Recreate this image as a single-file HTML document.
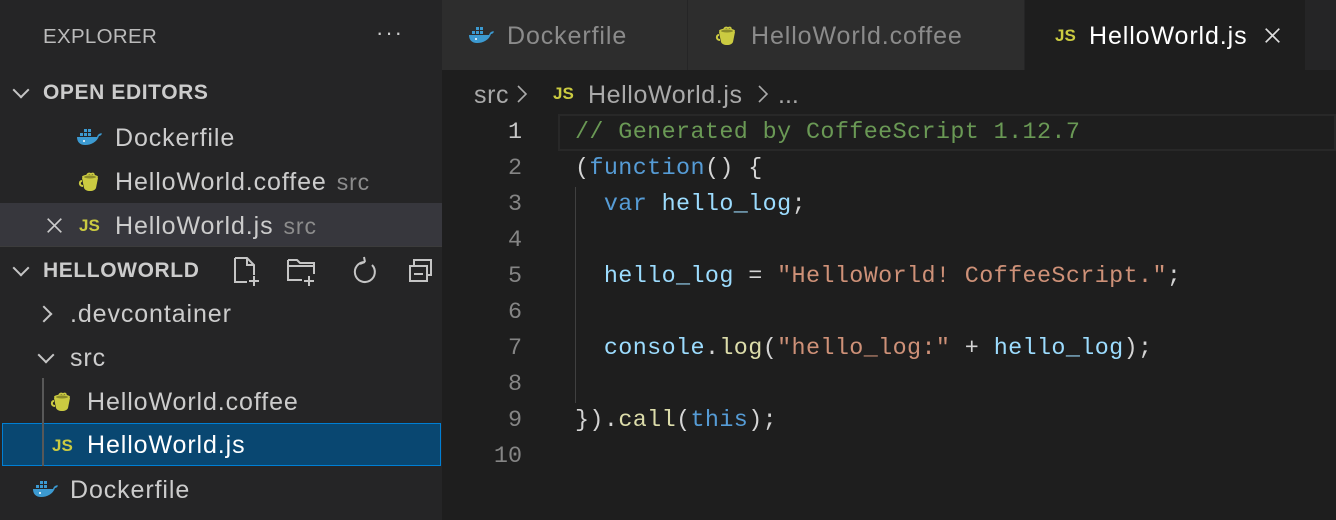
<!DOCTYPE html>
<html><head><style>
*{margin:0;padding:0;box-sizing:border-box}
body{width:1336px;height:520px;background:#1e1e1e;overflow:hidden;position:relative;font-family:"Liberation Sans",sans-serif;color:#ccc}
.a{position:absolute;white-space:nowrap}
#side{position:absolute;left:0;top:0;width:442px;height:520px;background:#252526}
.row{position:absolute;left:0;width:442px;height:44px;line-height:46px;font-size:25px;letter-spacing:0.9px;color:#ccc}
.row span.d{color:#8c8c8c;font-size:23px;margin-left:10px}
.js{color:#cbcb41;font-weight:bold;font-size:17px;position:absolute;letter-spacing:0}
.code{position:absolute;left:575px;font-family:"Liberation Mono",monospace;font-size:23.4px;letter-spacing:0.4px;line-height:36px;color:#d4d4d4;white-space:pre}
.ln{position:absolute;left:460px;width:62px;text-align:right;font-family:"Liberation Mono",monospace;font-size:23.4px;line-height:36px;color:#858585}
.c{color:#6a9955}.k{color:#569cd6}.v{color:#9cdcfe}.s{color:#ce9178}.f{color:#dcdcaa}
.chev{position:absolute;width:12px;height:12px;border-right:2px solid #c5c5c5;border-bottom:2px solid #c5c5c5}
.hd{font-size:21px;font-weight:bold;color:#ccc;letter-spacing:0.6px}
.tab{font-size:25px;letter-spacing:0.9px}
</style></head><body>
<svg width="0" height="0" style="position:absolute"><defs>
<symbol id="whale" viewBox="0 0 28 20"><path d="M1 10h20c1-3 3-4 5-3.5-.5 1.5-1.5 2.2-3 2.5-2 6-8 9-14 9-5 0-8-3-8-8z" fill="#3c9ad1"/><rect x="4" y="6" width="3" height="3" fill="#3c9ad1"/><rect x="8" y="6" width="3" height="3" fill="#3c9ad1"/><rect x="12" y="6" width="3" height="3" fill="#3c9ad1"/><rect x="8" y="2" width="3" height="3" fill="#3c9ad1"/><rect x="12" y="2" width="3" height="3" fill="#3c9ad1"/><circle cx="8" cy="14" r="1" fill="#fff"/></symbol>
<symbol id="cup" viewBox="0 0 24 20"><path d="M4 6h16l-2 10c-1 2-3 3-6 3s-5-1-6-3z" fill="#cbcb41"/><path d="M4 9c-3 0-3 5 1 5" stroke="#cbcb41" stroke-width="2" fill="none"/><ellipse cx="12" cy="5" rx="8" ry="2.5" fill="#cbcb41"/><ellipse cx="12" cy="5" rx="6" ry="1.5" fill="#8a8a2a"/><path d="M9 3c1-2 3-2 4-1 1-1 3-1 3 1" stroke="#cbcb41" stroke-width="1.5" fill="none"/></symbol>
<symbol id="x" viewBox="0 0 20 20"><path d="M2 2L18 18M18 2L2 18" stroke="currentColor" stroke-width="2" fill="none"/></symbol>
</defs></svg>

<div id="side">
<div class="a" style="left:43px;top:25px;font-size:20.5px;color:#bbb;letter-spacing:0.3px">EXPLORER</div>
<div class="a" style="left:376px;top:20px;font-size:22px;color:#ccc;letter-spacing:2px">···</div>
<div class="chev" style="left:15px;top:84px;transform:rotate(45deg)"></div>
<div class="a hd" style="left:43px;top:81px">OPEN EDITORS</div>
<div class="row" style="top:115px"><svg class="a" style="left:76px;top:12px" width="28" height="20"><use href="#whale"/></svg><span class="a" style="left:115px">Dockerfile</span></div>
<div class="row" style="top:159px"><svg class="a" style="left:78px;top:13px" width="24" height="20"><use href="#cup"/></svg><span class="a" style="left:115px">HelloWorld.coffee<span class="d">src</span></span></div>
<div class="row" style="top:203px;background:#37373d;height:43px"><svg class="a" style="left:46px;top:14px;color:#ccc" width="17" height="17"><use href="#x"/></svg><span class="js" style="left:79px;top:0">JS</span><span class="a" style="left:115px">HelloWorld.js<span class="d">src</span></span></div>
<div class="a" style="left:0;top:246px;width:442px;height:1px;background:#3c3c3c"></div>
<div class="chev" style="left:15px;top:262px;transform:rotate(45deg)"></div>
<div class="a hd" style="left:43px;top:259px">HELLOWORLD</div>
<svg class="a" style="left:232px;top:256px" width="200" height="32" fill="none" stroke="#c5c5c5" stroke-width="2">
<path d="M3 2h12l7 7v10M3 2v24h12M15 2v7h7M22 20v10M17 25h10"/>
<path d="M56 4h9l3 3h14v11M56 4v20h14M56 10h26M77 20v10M72 25h10"/>
<path d="M133 6a10 10 0 1 0 7 3M133 6l-1-5M133 6l-5 2"/>
<path d="M178 10h17v15h-17zM182 10v-6h17v15h-4M182 18h9"/>
</svg>
<div class="chev" style="left:38px;top:308px;transform:rotate(-45deg)"></div>
<div class="row" style="top:291px"><span class="a" style="left:70px">.devcontainer</span></div>
<div class="chev" style="left:40px;top:349px;transform:rotate(45deg)"></div>
<div class="row" style="top:335px"><span class="a" style="left:70px">src</span></div>
<div class="row" style="top:379px"><svg class="a" style="left:50px;top:13px" width="24" height="20"><use href="#cup"/></svg><span class="a" style="left:87px">HelloWorld.coffee</span></div>
<div class="row" style="top:423px;background:#094771;border:1px solid #007fd4;height:43px;line-height:43px;left:2px;width:439px"><span class="js" style="left:49px;top:0">JS</span><span class="a" style="left:84px;color:#fff">HelloWorld.js</span></div>
<div class="a" style="left:42px;top:378px;width:2px;height:88px;background:#585858"></div>
<div class="row" style="top:467px"><svg class="a" style="left:32px;top:12px" width="28" height="20"><use href="#whale"/></svg><span class="a" style="left:70px">Dockerfile</span></div>
</div>

<div class="a" style="left:442px;top:0;width:894px;height:70px;background:#252526"></div>
<div class="a tab" style="left:442px;top:0;width:245px;height:70px;background:#2d2d2d;line-height:72px;color:#8b8b8b"><svg class="a" style="left:26px;top:25px" width="28" height="20"><use href="#whale"/></svg><span class="a" style="left:65px">Dockerfile</span></div>
<div class="a tab" style="left:688px;top:0;width:336px;height:70px;background:#2d2d2d;line-height:72px;color:#8b8b8b"><svg class="a" style="left:27px;top:25px" width="24" height="22"><use href="#cup"/></svg><span class="a" style="left:63px">HelloWorld.coffee</span></div>
<div class="a tab" style="left:1025px;top:0;width:280px;height:70px;background:#1e1e1e;line-height:72px;color:#fff"><span class="js" style="left:30px;top:0">JS</span><span class="a" style="left:64px">HelloWorld.js</span><svg class="a" style="left:239px;top:27px;color:#ddd" width="17" height="17"><use href="#x"/></svg></div>

<div class="a" style="left:474px;top:79px;font-size:25px;line-height:32px;color:#a9a9a9;letter-spacing:0.6px">src</div>
<svg class="a" style="left:516px;top:84px" width="12" height="20" fill="none" stroke="#aaa" stroke-width="1.6"><path d="M2 2l8 8-8 8"/></svg>
<span class="js" style="left:553px;top:83px;line-height:22px">JS</span>
<div class="a" style="left:588px;top:79px;font-size:25px;line-height:32px;color:#a9a9a9;letter-spacing:0.6px">HelloWorld.js</div>
<svg class="a" style="left:757px;top:84px" width="12" height="20" fill="none" stroke="#aaa" stroke-width="1.6"><path d="M2 2l8 8-8 8"/></svg>
<div class="a" style="left:778px;top:79px;font-size:25px;line-height:32px;color:#a9a9a9">...</div>

<div class="a" style="left:558px;top:114px;width:778px;height:37px;border:2px solid #282828"></div>
<div class="a" style="left:575px;top:187px;width:1px;height:216px;background:#404040"></div>
<div class="ln" style="top:115px"><span style="color:#c6c6c6">1</span><br>2<br>3<br>4<br>5<br>6<br>7<br>8<br>9<br>10</div>
<div class="code" style="top:115px"><span class="c">// Generated by CoffeeScript 1.12.7</span>
(<span class="k">function</span>() {
  <span class="k">var</span> <span class="v">hello_log</span>;

  <span class="v">hello_log</span> = <span class="s">"HelloWorld! CoffeeScript."</span>;

  <span class="v">console</span>.<span class="f">log</span>(<span class="s">"hello_log:"</span> + <span class="v">hello_log</span>);

}).<span class="f">call</span>(<span class="k">this</span>);
</div>
</body></html>
